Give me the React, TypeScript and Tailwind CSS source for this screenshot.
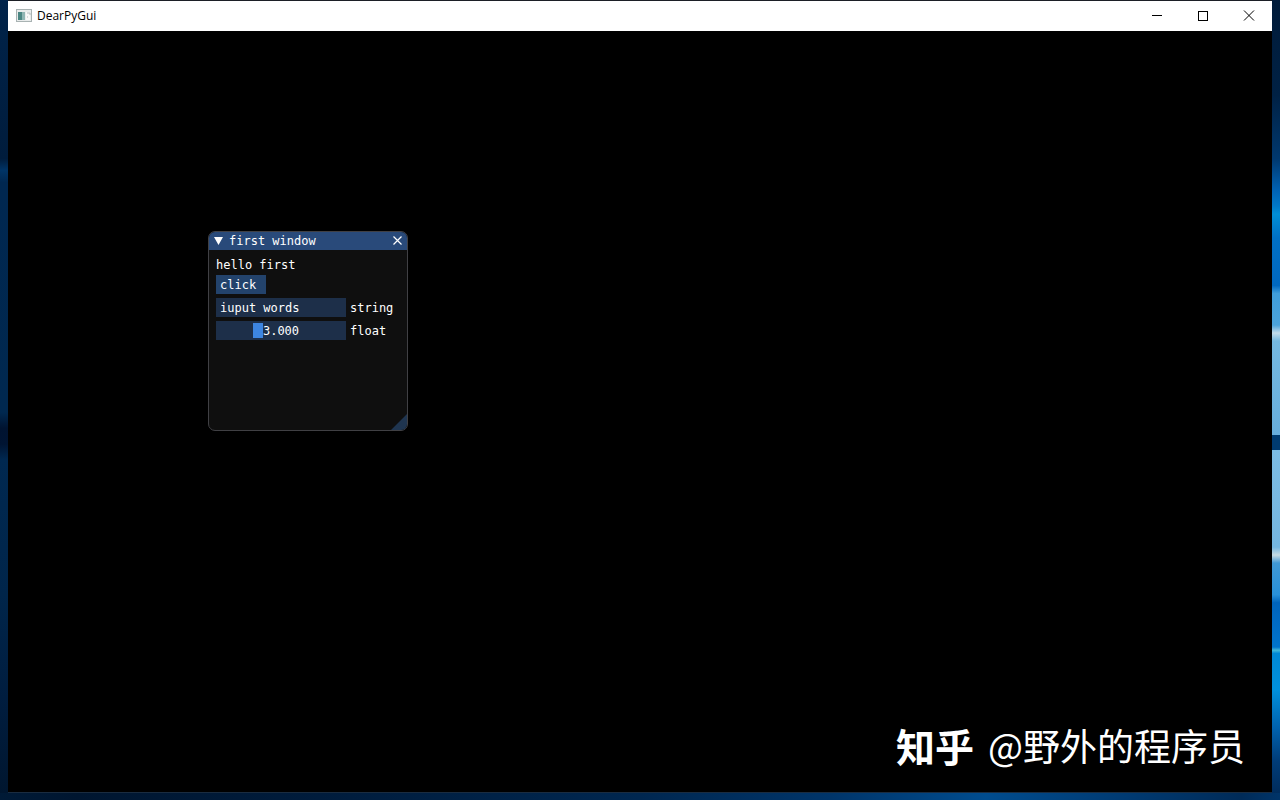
import { useState } from "react";

const LEFT_EDGE =
  "bg-[linear-gradient(to_bottom,#00234a_0%,#001c3c_20%,#003466_21.5%,#002750_23%,#00284f_52%,#001330_54%,#001432_56%,#002850_58%,#00254a_75%,#001d3f_88%,#00162f_100%)]";
const RIGHT_EDGE =
  "bg-[linear-gradient(to_bottom,#001b3a_0%,#002144_12%,#00386e_20%,#0062b4_24%,#0078c8_26%,#008fd6_27%,#0070c4_30%,#0068c0_36%,#3f9edb_37%,#4ba3dc_41%,#c4dcea_42%,#74b8e0_43%,#67aedc_54.8%,#003b70_54.9%,#003b70_56.7%,#7cbce4_56.8%,#74b6e0_69%,#c8dce4_70%,#4098d4_71%,#2890d8_75%,#0064bc_76%,#0074cc_81.6%,#40b8d8_82%,#0088d4_82.4%,#0090dc_87%,#0060ac_92%,#003c78_96%,#002c5c_100%)]";
const BOTTOM_EDGE =
  "bg-[linear-gradient(to_right,#001a36_0%,#001630_6%,#001c3c_25%,#002750_50%,#00356a_65%,#004c8e_77%,#003a72_88%,#002b58_97%,#003468_100%)]";

function TitleBar() {
  const button = "flex h-full w-[46px] items-center justify-center hover:bg-gray-200";

  return (
    <header className="flex h-[30px] shrink-0 items-center justify-between bg-white pl-2 text-black">
      <div className="flex items-center gap-[5px]">
        <svg width="16" height="14" viewBox="0 0 16 14" aria-hidden="true">
          <rect x="0.5" y="0.5" width="15" height="12" fill="#e9ecec" stroke="#a9b3b3" />
          <rect x="2" y="3" width="7" height="8" fill="#8fb5b3" />
          <rect x="2" y="3" width="4" height="8" fill="#4b8683" />
          <rect x="10" y="3" width="4" height="8" fill="#f8f8f8" />
          <path d="M11 4h3v2M11 8h1" stroke="#b4bcbc" fill="none" />
        </svg>
        <h1 className="font-['Open_Sans',sans-serif] text-[12px] leading-4">DearPyGui</h1>
      </div>
      <div className="flex h-full">
        <button type="button" aria-label="Minimize" className={button}>
          <svg width="10" height="10" viewBox="0 0 10 10" shapeRendering="crispEdges">
            <rect y="4" width="10" height="1" fill="black" />
          </svg>
        </button>
        <button type="button" aria-label="Maximize" className={button}>
          <svg width="10" height="10" viewBox="0 0 10 10" shapeRendering="crispEdges">
            <rect x="0.5" y="0.5" width="9" height="9" fill="none" stroke="black" />
          </svg>
        </button>
        <button type="button" aria-label="Close" className={button}>
          <svg width="10" height="10" viewBox="0 0 10 10" className="overflow-visible">
            <path d="M0 -0.5l10 10M10 -0.5l-10 10" stroke="black" fill="none" />
          </svg>
        </button>
      </div>
    </header>
  );
}

function FirstWindow() {
  const [words, setWords] = useState("iuput words");
  const [value, setValue] = useState(3);

  return (
    <section className="absolute top-[200px] left-[200px] flex h-[200px] w-[200px] flex-col overflow-hidden rounded-[7px] border border-[#404044] bg-[#0f0f0f] font-['DejaVu_Sans_Mono',monospace] text-[12px] leading-[13px] text-white">
      <div className="flex h-[18px] shrink-0 items-center justify-between bg-[#294a7a] px-[5px]">
        <div className="flex items-center gap-[6px]">
          <button type="button" aria-label="Collapse">
            <svg width="9" height="8" viewBox="0 0 9 8">
              <path d="M0 0h9L4.5 8z" fill="white" />
            </svg>
          </button>
          <h2>first window</h2>
        </div>
        <button type="button" aria-label="Close window">
          <svg width="9" height="10" viewBox="0 0 9 10">
            <path d="M0.5 0.5l8 8M8.5 0.5l-8 8" stroke="white" strokeWidth="1.2" />
          </svg>
        </button>
      </div>

      <div className="flex flex-col items-start gap-1 px-[7px] pt-2 leading-[15px]">
        <p className="h-[13px]">hello first</p>
        <button type="button" className="flex h-[19px] w-[50px] items-end bg-[#23436c] px-1 pb-px hover:bg-[#4296fa]">
          click
        </button>
        <div className="flex items-end gap-1">
          <input
            id="string"
            type="text"
            value={words}
            onChange={(e) => setWords(e.target.value)}
            className="h-[19px] w-[130px] bg-[#1d2f49] px-1 outline-none"
          />
          <label htmlFor="string" className="pb-px">string</label>
        </div>
        <div className="flex items-end gap-1">
          <div className="relative h-[19px] w-[130px]">
            <input
              id="float"
              type="range"
              min={0}
              max={10}
              step={0.001}
              value={value}
              onChange={(e) => setValue(Number(e.target.value))}
              className="block h-full w-full appearance-none bg-[#1d2f49] px-[2px] outline-none [&::-webkit-slider-thumb]:h-[15px] [&::-webkit-slider-thumb]:w-[10px] [&::-webkit-slider-thumb]:appearance-none [&::-webkit-slider-thumb]:bg-[#3d85e0]"
            />
            <output
              htmlFor="float"
              className="pointer-events-none absolute inset-0 flex items-end justify-center pb-px"
            >
              {value.toFixed(3)}
            </output>
          </div>
          <label htmlFor="float" className="pb-px">float</label>
        </div>
      </div>

      {/* resize grip */}
      <svg className="absolute right-0 bottom-0" width="16" height="16" viewBox="0 0 16 16" aria-hidden="true">
        <path d="M16 0v16H0z" fill="#1f3550" />
      </svg>
    </section>
  );
}

export default function App() {
  return (
    <div className="flex h-screen flex-col overflow-hidden bg-[#001b3a]">
      <div className="flex min-h-0 flex-1">
        <div className={`w-2 shrink-0 ${LEFT_EDGE}`} />
        <div className="flex min-w-0 flex-1 flex-col border-t border-b border-t-[#1c1f26] border-b-[#1a2c40]">
          <TitleBar />
          <main className="relative flex flex-1 items-end justify-end bg-black">
            <FirstWindow />
            <p className="flex items-center gap-[14px] pr-[27px] pb-5 font-['Noto_Sans_CJK_SC',sans-serif] text-[37px] leading-[54px] text-white">
              <span className="text-[39px] font-bold">知乎</span>
              <span>@野外的程序员</span>
            </p>
          </main>
        </div>
        <div className={`w-2 shrink-0 ${RIGHT_EDGE}`} />
      </div>
      <div className={`h-[7px] shrink-0 ${BOTTOM_EDGE}`} />
    </div>
  );
}
